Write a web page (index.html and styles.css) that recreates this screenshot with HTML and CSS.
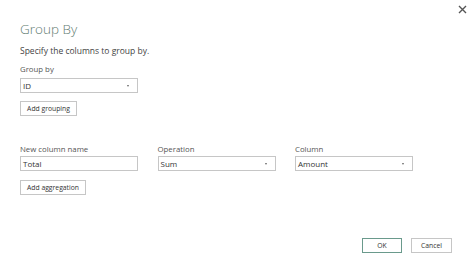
FILE: index.html
```html
<!DOCTYPE html>
<html>
<head>
<meta charset="utf-8">
<link rel="stylesheet" href="styles.css">
</head>
<body>
<div class="dialog">
  <div class="topbar">
    <button class="close" aria-label="Close">
      <svg width="9" height="9" viewBox="0 0 9 9"><path d="M1 1L8 8M8 1L1 8" stroke="#555" stroke-width="1.4"/></svg>
    </button>
  </div>
  <div class="content">
    <h1 class="title">Group By</h1>
    <p class="desc">Specify the columns to group by.</p>
    <div class="field">
      <div class="label">Group by</div>
      <div class="select w118"><span>ID</span><span class="caret"></span></div>
    </div>
    <button class="btn grouping">Add grouping</button>
    <div class="agg">
      <div class="field">
        <div class="label">New column name</div>
        <div class="input"><span>Total</span></div>
      </div>
      <div class="field">
        <div class="label">Operation</div>
        <div class="select"><span>Sum</span><span class="caret"></span></div>
      </div>
      <div class="field">
        <div class="label">Column</div>
        <div class="select"><span>Amount</span><span class="caret"></span></div>
      </div>
    </div>
    <button class="btn aggbtn">Add aggregation</button>
    <div class="footer">
      <button class="btn ok">OK</button>
      <button class="btn cancel">Cancel</button>
    </div>
  </div>
</div>
</body>
</html>
```

FILE: styles.css
```css
* { box-sizing: border-box; }
html, body { margin: 0; padding: 0; background: #fff; }
body {
  width: 474px;
  height: 274px;
  overflow: hidden;
  font-family: "Open Sans", "Noto Sans", sans-serif;
  color: #444;
  white-space: nowrap;
}
.dialog { width: 474px; height: 274px; display: flex; flex-direction: column; }
.topbar { display: flex; justify-content: flex-end; height: 20px; padding: 5px 7px 0 0; }
.close { border: 0; background: none; padding: 0; width: 9px; height: 9px; display: flex; }
.content { padding: 0 20px; display: flex; flex-direction: column; flex: 1; }
.title {
  margin: 0;
  font-weight: 300;
  font-size: 13.5px;
  line-height: 18px;
  color: #5f7d72;
}
.desc { margin: 6px 0 0; font-size: 8.5px; line-height: 13px; color: #444; }
.field { display: flex; flex-direction: column; }
.content > .field { margin-top: 6px; }
.label { font-size: 7.8px; line-height: 12px; color: #555; margin-bottom: 3px; }
.select, .input {
  height: 15px;
  border: 1px solid #c6c6c6;
  background: #fff;
  display: flex;
  align-items: center;
  justify-content: space-between;
  padding: 0 8px 0 2px;
  font-size: 8px;
  color: #333;
}
.w118 { width: 118px; }
.caret {
  width: 0; height: 0;
  border-left: 1.5px solid transparent;
  border-right: 1.5px solid transparent;
  border-top: 2px solid #666;
}
.btn {
  font-family: inherit;
  font-size: 6.8px;
  color: #333;
  background: #fff;
  border: 1px solid #c6c6c6;
  height: 15px;
  padding: 0;
  line-height: 13px;
  align-self: flex-start;
  white-space: nowrap;
}
.grouping { margin-top: 8px; width: 57px; }
.agg {
  margin-top: 27px;
  display: grid;
  grid-template-columns: 118px 118px 118px;
  column-gap: 19.5px;
}
.agg .label { margin-bottom: 1px; }
.aggbtn { margin-top: 9px; width: 66px; }
.footer { margin-top: 43px; display: flex; justify-content: flex-end; gap: 9px; padding-right: 2px; }
.ok { width: 40px; border-color: #6a9a8c; }
.cancel { width: 41px; }
```
